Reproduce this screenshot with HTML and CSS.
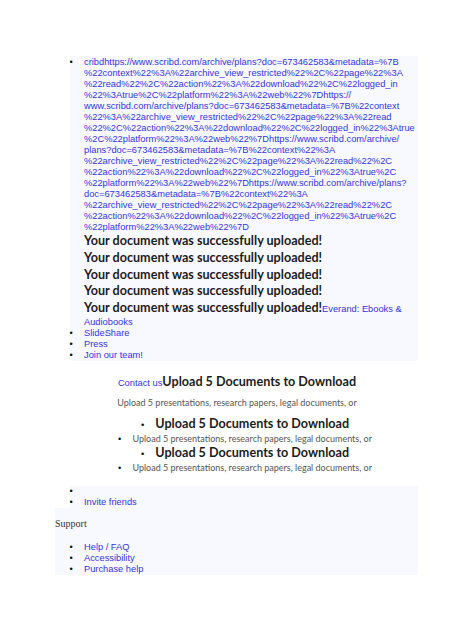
FILE: index.html
```html
<!DOCTYPE html>
<html lang="en">
<head>
    <meta charset="UTF-8">
    <meta name="viewport" content="width=device-width, initial-scale=1.0">
    <title>Scribd footer</title>
    <link rel="stylesheet" href="styles.css">
</head>
<body>
    <ul class="nav-list top-nav">
        <li>
            <a href="#" class="long-link">cribdhttps://www.scribd.com/archive/plans?doc=673462583&amp;metadata=%7B<br>%22context%22%3A%22archive_view_restricted%22%2C%22page%22%3A<br>%22read%22%2C%22action%22%3A%22download%22%2C%22logged_in<br>%22%3Atrue%2C%22platform%22%3A%22web%22%7Dhttps://<br>www.scribd.com/archive/plans?doc=673462583&amp;metadata=%7B%22context<br>%22%3A%22archive_view_restricted%22%2C%22page%22%3A%22read<br>%22%2C%22action%22%3A%22download%22%2C%22logged_in%22%3Atrue<br>%2C%22platform%22%3A%22web%22%7Dhttps://www.scribd.com/archive/<br>plans?doc=673462583&amp;metadata=%7B%22context%22%3A<br>%22archive_view_restricted%22%2C%22page%22%3A%22read%22%2C<br>%22action%22%3A%22download%22%2C%22logged_in%22%3Atrue%2C<br>%22platform%22%3A%22web%22%7Dhttps://www.scribd.com/archive/plans?<br>doc=673462583&amp;metadata=%7B%22context%22%3A<br>%22archive_view_restricted%22%2C%22page%22%3A%22read%22%2C<br>%22action%22%3A%22download%22%2C%22logged_in%22%3Atrue%2C<br>%22platform%22%3A%22web%22%7D</a>
            <p class="doc-title">Your document was successfully uploaded!</p>
            <p class="doc-title">Your document was successfully uploaded!</p>
            <p class="doc-title">Your document was successfully uploaded!</p>
            <p class="doc-title">Your document was successfully uploaded!</p>
            <span class="doc-title">Your document was successfully uploaded!</span><a href="#">Everand: Ebooks &amp; Audiobooks</a>
        </li>
        <li><a href="#">SlideShare</a></li>
        <li><a href="#">Press</a></li>
        <li><a href="#">Join our team!</a></li>
    </ul>

    <div class="promo">
        <p class="promo-head"><a href="#">Contact us</a><span class="doc-title">Upload 5 Documents to Download</span></p>
        <p class="promo-sub">Upload 5 presentations, research papers, legal documents, or</p>
        <ul class="promo-list">
            <li class="promo-item-head"><span class="doc-title">Upload 5 Documents to Download</span></li>
            <li class="promo-item-sub">Upload 5 presentations, research papers, legal documents, or</li>
            <li class="promo-item-head"><span class="doc-title">Upload 5 Documents to Download</span></li>
            <li class="promo-item-sub">Upload 5 presentations, research papers, legal documents, or</li>
        </ul>
    </div>

    <ul class="nav-list invite-nav">
        <li></li>
        <li><a href="#">Invite friends</a></li>
    </ul>

    <div class="support">
        <p class="support-title">Support</p>
        <ul class="nav-list">
            <li><a href="#">Help / FAQ</a></li>
            <li><a href="#">Accessibility</a></li>
            <li><a href="#">Purchase help</a></li>
        </ul>
    </div>
</body>
</html>
```

FILE: styles.css
```css
body {
    margin: 0;
    font-family: 'Liberation Sans', Arial, sans-serif;
    font-size: 9.3px;
    line-height: 11px;
    color: #222;
    background: #fff;
}

a {
    color: #3434e0;
    text-decoration: none;
}

li::marker {
    content: "\2022\2003\2009";
    color: #111;
}

.nav-list {
    list-style: disc;
    margin: 0 56px 0 70px;
    padding: 0 0 0 14px;
    background: #f8f9fe;
}

.top-nav {
    margin-top: 56px;
    padding-top: 1px;
}

.long-link {
    white-space: nowrap;
}

.doc-title {
    font-family: 'Lato', sans-serif;
    font-weight: 700;
    font-size: 12.6px;
    line-height: 16.75px;
    color: #1c1c1c;
}

p.doc-title {
    margin: 0;
}

/* upload promo block */
.promo {
    text-align: center;
    margin-top: 13px;
}

.promo p {
    margin: 0;
}

.promo-head {
    line-height: 16px;
}

.promo .doc-title {
    line-height: 16px;
}

.promo-sub,
.promo-item-sub {
    font-family: 'Lato', sans-serif;
    font-size: 9px;
    line-height: 12px;
    color: #555;
}

.promo .promo-sub {
    margin-top: 6px;
}

.promo-list {
    list-style-position: inside;
    margin: 7px 0 0;
    padding-left: 16px;
}

.promo-list li::marker {
    font-family: 'Liberation Sans', Arial, sans-serif;
    font-size: 9.3px;
}

.promo-item-head {
    line-height: 16px;
}

.invite-nav {
    margin-top: 12px;
}

.support {
    margin: 0 56px 0 55px;
    padding-top: 10px;
    background: #f8f9fe;
}

.support-title {
    margin: 0 0 12px;
    font-family: 'Liberation Serif', 'Times New Roman', serif;
    font-size: 10px;
    line-height: 12px;
    color: #333;
}

.support .nav-list {
    margin: 0 0 0 15px;
}
```
